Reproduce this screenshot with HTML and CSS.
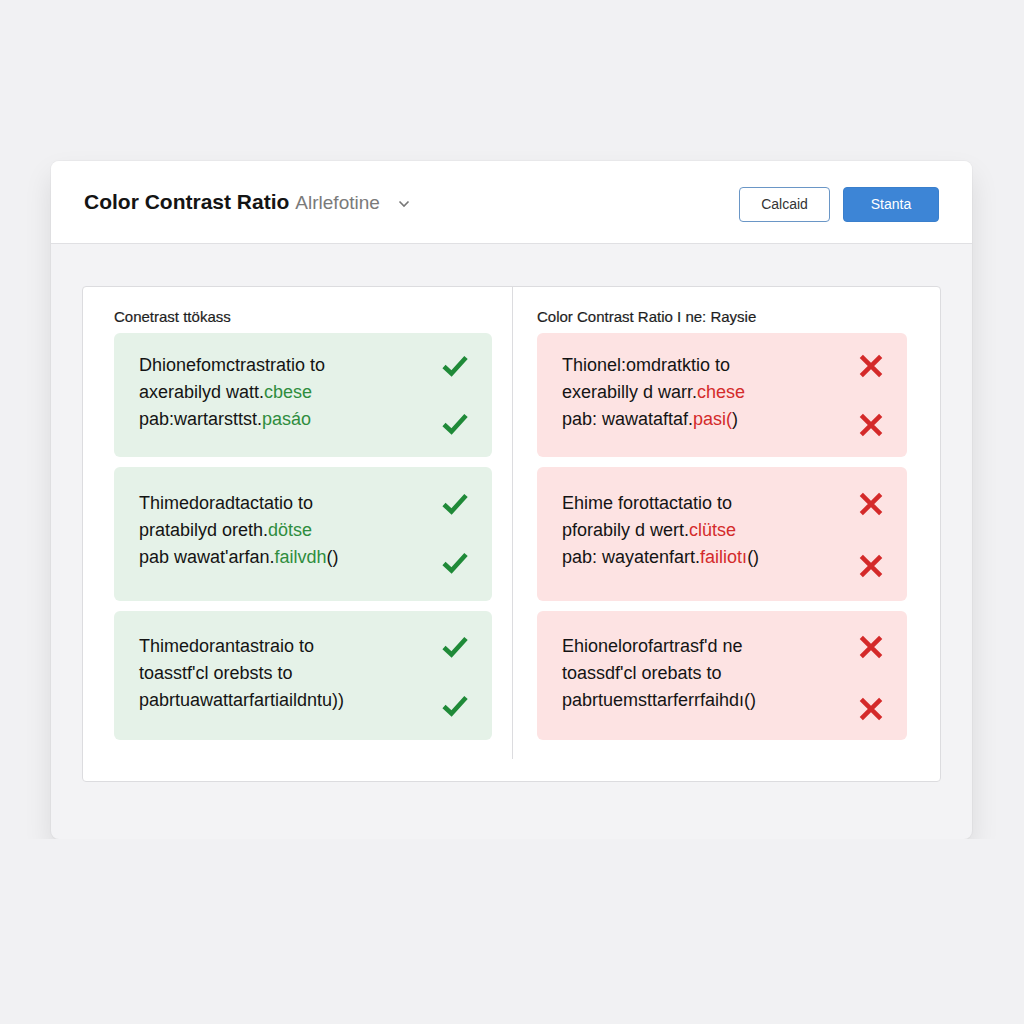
FILE: index.html
```html
<!DOCTYPE html>
<html lang="en">
  <head>
    <meta charset="UTF-8" />
    <title>Color Contrast Ratio</title>
    <link rel="stylesheet" href="styles.css">
  </head>
  <body>
    <div class="window">
      <header class="topBar">
        <div class="title">
          <h1>Color Contrast Ratio</h1>
          <span class="sub">Alrlefotine</span>
          <svg class="chev" width="12" height="8" viewBox="0 0 12 8"><path d="M1.5 1.5 L6 6 L10.5 1.5" fill="none" stroke="#777" stroke-width="1.6"/></svg>
        </div>
        <div class="actions">
          <button class="btn ghost">Calcaid</button>
          <button class="btn primary">Stanta</button>
        </div>
      </header>

      <section class="panel">
        <div class="col pass">
          <div class="colLabel">Conetrast ttökass</div>

          <div class="card c1">
            <p>Dhionefomctrastratio to<br>axerabilyd watt.<em>cbese</em><br>pab:wartarsttst.<em>pasáo</em></p>
            <div class="icons">
              <svg viewBox="0 0 30 24"><path d="M4 13 L11.5 20 L26 4"/></svg>
              <svg viewBox="0 0 30 24"><path d="M4 13 L11.5 20 L26 4"/></svg>
            </div>
          </div>

          <div class="card c2">
            <p>Thimedoradtactatio to<br>pratabilyd oreth.<em>dötse</em><br>pab wawat'arfan.<em>failvdh</em>()</p>
            <div class="icons">
              <svg viewBox="0 0 30 24"><path d="M4 13 L11.5 20 L26 4"/></svg>
              <svg viewBox="0 0 30 24"><path d="M4 13 L11.5 20 L26 4"/></svg>
            </div>
          </div>

          <div class="card c3">
            <p>Thimedorantastraio to<br>toasstf'cl orebsts to<br>pabrtuawattarfartiaildntu))</p>
            <div class="icons">
              <svg viewBox="0 0 30 24"><path d="M4 13 L11.5 20 L26 4"/></svg>
              <svg viewBox="0 0 30 24"><path d="M4 13 L11.5 20 L26 4"/></svg>
            </div>
          </div>
        </div>

        <div class="col fail">
          <div class="colLabel">Color Contrast Ratio I ne: Raysie</div>

          <div class="card c1">
            <p>Thionel:omdratktio to<br>exerabilly d warr.<em>chese</em><br>pab: wawataftaf.<em>pasi(</em>)</p>
            <div class="icons">
              <svg viewBox="0 0 26 26"><path d="M4 4 L22 22 M22 4 L4 22"/></svg>
              <svg viewBox="0 0 26 26"><path d="M4 4 L22 22 M22 4 L4 22"/></svg>
            </div>
          </div>

          <div class="card c2">
            <p>Ehime forottactatio to<br>pforabily d wert.<em>clütse</em><br>pab: wayatenfart.<em>failiotı</em>()</p>
            <div class="icons">
              <svg viewBox="0 0 26 26"><path d="M4 4 L22 22 M22 4 L4 22"/></svg>
              <svg viewBox="0 0 26 26"><path d="M4 4 L22 22 M22 4 L4 22"/></svg>
            </div>
          </div>

          <div class="card c3">
            <p>Ehionelorofartrasf'd ne<br>toassdf'cl orebats to<br>pabrtuemsttarferrfaihdı()</p>
            <div class="icons">
              <svg viewBox="0 0 26 26"><path d="M4 4 L22 22 M22 4 L4 22"/></svg>
              <svg viewBox="0 0 26 26"><path d="M4 4 L22 22 M22 4 L4 22"/></svg>
            </div>
          </div>
        </div>
      </section>
    </div>
  </body>
</html>
```

FILE: styles.css
```css
html {
  font-family: 'Liberation Sans', Arial, sans-serif;
  color: #1a1a1a;
}
body {
  margin: 0;
  background: #f1f1f3;
  padding: 161px 52px 0 51px;
}
.window {
  width: 921px;
  height: 678px;
  box-sizing: border-box;
  background: #f3f3f5;
  border-radius: 8px;
  box-shadow: 0 14px 28px rgba(0, 0, 0, 0.1), 0 0 0 1px #ebebed;
  overflow: hidden;
}
.topBar {
  height: 83px;
  box-sizing: border-box;
  background: #fff;
  border-bottom: 1px solid #e0e0e3;
  display: flex;
  align-items: center;
  justify-content: space-between;
  padding: 0 33px 0 33px;
}
.title {
  display: flex;
  align-items: baseline;
  gap: 6px;
}
.title h1 {
  margin: 0;
  font-size: 21px;
  font-weight: 700;
  color: #141414;
}
.title .sub {
  font-size: 19px;
  color: #7a7a7a;
}
.chev {
  margin-left: 12px;
  align-self: center;
  margin-top: 3px;
}
.actions {
  display: flex;
  gap: 13px;
  padding-top: 4px;
}
.btn {
  height: 35px;
  font-family: inherit;
  font-size: 14px;
  border-radius: 4px;
  cursor: pointer;
}
.btn.ghost {
  width: 91px;
  background: #fff;
  border: 1.5px solid #6a96c6;
  color: #333;
}
.btn.primary {
  width: 96px;
  background: #3d85d6;
  border: 1px solid #3a7fcc;
  color: #fff;
}
.panel {
  margin: 42px 31px 0 31px;
  background: #fff;
  border: 1px solid #dcdcdf;
  border-radius: 4px;
  display: grid;
  grid-template-columns: 429px 1fr;
  padding-bottom: 22px;
  height: 496px;
  box-sizing: border-box;
}
.col {
  display: flex;
  flex-direction: column;
}
.col.pass {
  padding: 21px 20px 0 31px;
}
.col.fail {
  border-left: 1px solid #dcdcdf;
  padding: 21px 33px 0 24px;
}
.colLabel {
  font-size: 15px;
  line-height: 18px;
  margin-bottom: 7px;
  color: #1e1e1e;
  -webkit-text-stroke: 0.2px #1e1e1e;
}
.card {
  display: flex;
  justify-content: space-between;
  border-radius: 6px;
  padding: 19px 22px 0 25px;
  box-sizing: border-box;
  margin-bottom: 10px;
}
.pass .card {
  background: #e5f2e8;
}
.fail .card {
  background: #fde3e3;
}
.card.c1 {
  height: 124px;
}
.card.c2 {
  height: 134px;
  padding-top: 23px;
}
.card.c3 {
  height: 129px;
  padding-top: 22px;
}
.card p {
  margin: 0;
  font-size: 18px;
  line-height: 27px;
  color: #141414;
}
.card em {
  font-style: normal;
}
.pass .card em {
  color: #2f8d3e;
}
.fail .card em {
  color: #d42b2b;
}
.icons {
  display: flex;
  flex-direction: column;
  gap: 33px;
  padding-top: 1px;
}
.icons svg {
  width: 30px;
  height: 25px;
  fill: none;
  stroke-width: 4.6;
}
.pass .icons svg {
  stroke: #1f8a38;
}
.fail .icons svg {
  stroke: #d42a2a;
  width: 28px;
  height: 28px;
  stroke-width: 4.2;
}
.fail .icons {
  gap: 31px;
  padding-top: 0;
}
.card.c2 .icons,
.card.c3 .icons {
  gap: 34px;
}
```
